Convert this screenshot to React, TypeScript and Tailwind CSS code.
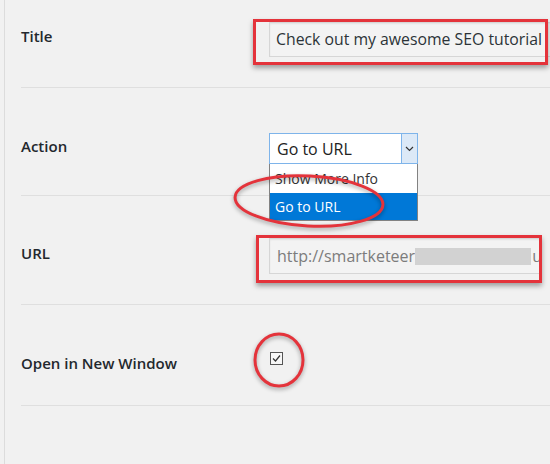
import React from "react";

const font = "font-['Open_Sans','Liberation_Sans',sans-serif]";

function Label({ children, pt }: { children: React.ReactNode; pt: string }) {
  return (
    <div className={`w-[248px] shrink-0 ${pt} text-[15px] leading-[22px] font-semibold text-[#23282d]`}>
      {children}
    </div>
  );
}

export default function App() {
  return (
    <div className={`h-[464px] w-[550px] overflow-hidden bg-[#f1f1f1] ${font}`}>
      <div className="ml-[4px] h-full border-l border-[#dcdcdc] pl-[16px]">
        {/* Title */}
        <div className="flex h-[88px] border-b border-[#dfdfdf]">
          <Label pt="pt-[25px]">Title</Label>
          <div className="relative pt-[22px]">
            <div className="flex h-[35px] w-[300px] items-center border border-[#d6d6d6] bg-[#f3f3f3] pl-[6px] text-[15.8px] text-[#2c3338] shadow-[inset_0_1px_2px_rgba(0,0,0,0.07)] whitespace-nowrap">
              Check out my awesome SEO tutorial
            </div>
            <div className="absolute left-[-16px] top-[19px] h-[46px] w-[295px] border-[3px] border-[#e4333b] shadow-[0_3px_5px_rgba(0,0,0,0.35)]" />
          </div>
        </div>

        {/* Action */}
        <div className="relative z-10 flex h-[108px] border-b border-[#dfdfdf]">
          <Label pt="pt-[47px]">Action</Label>
          <div className="relative pt-[45px]">
            <div className="flex h-[31px] w-[149px] border border-[#7eb4ea] bg-white">
              <div className="flex flex-1 items-center pl-[7px] text-[16px] text-[#222]">Go to URL</div>
              <div className="flex w-[16px] items-center justify-center border-l border-[#7eb4ea] bg-[#dce9f7]">
                <svg width="9" height="6" viewBox="0 0 9 6">
                  <path d="M1 1 L4.5 4.5 L8 1" fill="none" stroke="#333" strokeWidth="1.2" />
                </svg>
              </div>
            </div>
            <div className="absolute left-0 top-[76px] w-[149px] border border-t-0 border-[#828282] bg-white text-[14px]">
              <div className="flex h-[29px] items-center pl-[5px] text-[#333]">Show More Info</div>
              <div className="flex h-[27px] items-center bg-[#0078d7] pl-[5px] text-white">Go to URL</div>
            </div>
            <svg
              className="absolute left-[-38px] top-[85px] drop-shadow-[0_2px_2px_rgba(0,0,0,0.35)]"
              width="156"
              height="58"
              viewBox="0 0 156 58"
            >
              <ellipse cx="78" cy="28" rx="74" ry="25" fill="none" stroke="#e4333b" strokeWidth="3" transform="rotate(3 78 28)" />
            </svg>
          </div>
        </div>

        {/* URL */}
        <div className="flex h-[109px] border-b border-[#dfdfdf]">
          <Label pt="pt-[46px]">URL</Label>
          <div className="relative pt-[42px]">
            <div className="flex h-[36px] w-[273px] items-center overflow-hidden border border-r-0 border-[#d6d6d6] bg-[#f3f3f3] pl-[7px] text-[16px] text-[#7c7c7c] shadow-[inset_0_1px_2px_rgba(0,0,0,0.07)] whitespace-nowrap">
              <span>http://smartketeer</span>
              <span className="h-[17px] w-[116px] shrink-0 bg-[#d2d2d2]" />
              <span className="ml-[1px]">u:</span>
            </div>
            <div className="absolute left-[-13px] top-[39px] h-[48px] w-[286px] border-[3px] border-[#e4333b] shadow-[0_3px_5px_rgba(0,0,0,0.35)]" />
          </div>
        </div>

        {/* Open in New Window */}
        <div className="flex h-[101px] border-b border-[#dfdfdf]">
          <Label pt="pt-[47px]">Open in New Window</Label>
          <div className="relative pt-[47px]">
            <div className="ml-[1px] flex h-[13px] w-[13px] items-center justify-center border border-[#555] bg-[#f7f7f7]">
              <svg width="11" height="11" viewBox="0 0 11 11">
                <path d="M2 5.5 L4.5 8 L9 2.5" fill="none" stroke="#333" strokeWidth="1.2" />
              </svg>
            </div>
            <svg
              className="absolute left-[-17px] top-[26px] drop-shadow-[0_2px_2px_rgba(0,0,0,0.35)]"
              width="54"
              height="58"
              viewBox="0 0 54 58"
            >
              <ellipse cx="27" cy="29" rx="24" ry="26" fill="none" stroke="#e4333b" strokeWidth="3" />
            </svg>
          </div>
        </div>
      </div>
    </div>
  );
}
